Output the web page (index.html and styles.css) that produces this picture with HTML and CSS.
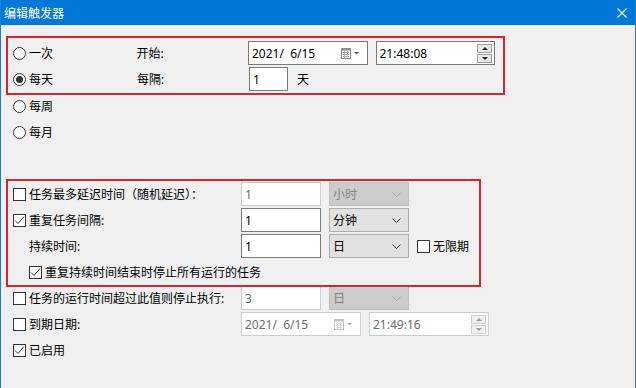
FILE: index.html
```html
<!DOCTYPE html>
<html>

<head>
    <meta charset="utf-8">
    <link rel="stylesheet" href="styles.css">
</head>

<body>
    <div class="window">
        <div class="titlebar">
            <span class="title">编辑触发器</span>
            <svg class="close" width="10" height="10" viewBox="0 0 10 10">
                <path d="M0.5 0.5 L9.5 9.5 M9.5 0.5 L0.5 9.5" stroke="#fff" stroke-width="1.1" fill="none" />
            </svg>
        </div>

        <div class="content">
            <div class="group schedule">
                <div class="row">
                    <label class="opt"><span class="radio"></span>一次</label>
                    <span class="field-label">开始:</span>
                    <div class="box picker">
                        <span class="value">2021/  6/15</span>
                        <svg class="cal" width="20" height="11" viewBox="0 0 20 11">
                            <rect x="0.5" y="0.5" width="9" height="10" fill="#fff" stroke="#8a8a8a" />
                            <rect x="0.5" y="0.5" width="9" height="2" fill="#8a8a8a" />
                            <path d="M2 4.5 H8 M2 6.5 H8 M2 8.5 H8 M3.5 3 V10 M6.5 3 V10" stroke="#b0b0b0" />
                            <path d="M13 4 L18 4 L15.5 6.5 Z" fill="#555" />
                        </svg>
                    </div>
                    <div class="box picker time">
                        <span class="value">21:48:08</span>
                        <div class="spin">
                            <span class="spin-btn"><i class="up"></i></span>
                            <span class="spin-btn"><i class="down"></i></span>
                        </div>
                    </div>
                </div>
                <div class="row">
                    <label class="opt"><span class="radio checked"></span>每天</label>
                    <span class="field-label">每隔:</span>
                    <div class="box every">1</div>
                    <span class="unit">天</span>
                </div>
            </div>

            <div class="row plain">
                <label class="opt"><span class="radio"></span>每周</label>
            </div>
            <div class="row plain">
                <label class="opt"><span class="radio"></span>每月</label>
            </div>

            <div class="group advanced">
                <div class="row">
                    <label class="check-label"><span class="check"></span>任务最多延迟时间（随机延迟）：</label>
                    <div class="box num disabled">1</div>
                    <div class="combo disabled"><span>小时</span>
                        <svg width="9" height="5" viewBox="0 0 9 5"><path d="M0.5 0.5 L4.5 4.5 L8.5 0.5" stroke="#a8a8a8" fill="none" /></svg>
                    </div>
                </div>
                <div class="row">
                    <label class="check-label"><span class="check checked">
                        <svg width="11" height="11" viewBox="0 0 11 11"><path d="M1 5.5 L4 8.5 L10 1.5" stroke="#333" fill="none" /></svg>
                    </span>重复任务间隔:</label>
                    <div class="box num">1</div>
                    <div class="combo"><span>分钟</span>
                        <svg width="9" height="5" viewBox="0 0 9 5"><path d="M0.5 0.5 L4.5 4.5 L8.5 0.5" stroke="#333" fill="none" /></svg>
                    </div>
                </div>
                <div class="row sub">
                    <span class="sub-label">持续时间:</span>
                    <div class="box num">1</div>
                    <div class="combo"><span>日</span>
                        <svg width="9" height="5" viewBox="0 0 9 5"><path d="M0.5 0.5 L4.5 4.5 L8.5 0.5" stroke="#333" fill="none" /></svg>
                    </div>
                    <label class="inline-check"><span class="check"></span>无限期</label>
                </div>
                <div class="row sub">
                    <label class="inline-check"><span class="check checked">
                        <svg width="11" height="11" viewBox="0 0 11 11"><path d="M1 5.5 L4 8.5 L10 1.5" stroke="#333" fill="none" /></svg>
                    </span>重复持续时间结束时停止所有运行的任务</label>
                </div>
            </div>

            <div class="row plain">
                <label class="check-label"><span class="check"></span>任务的运行时间超过此值则停止执行:</label>
                <div class="box num disabled">3</div>
                <div class="combo disabled"><span>日</span>
                    <svg width="9" height="5" viewBox="0 0 9 5"><path d="M0.5 0.5 L4.5 4.5 L8.5 0.5" stroke="#a8a8a8" fill="none" /></svg>
                </div>
            </div>
            <div class="row plain">
                <label class="check-label"><span class="check"></span>到期日期:</label>
                <div class="box picker disabled">
                    <span class="value">2021/  6/15</span>
                    <svg class="cal" width="20" height="11" viewBox="0 0 20 11">
                        <rect x="0.5" y="0.5" width="9" height="10" fill="#fff" stroke="#c4c4c4" />
                        <rect x="0.5" y="0.5" width="9" height="2" fill="#c4c4c4" />
                        <path d="M2 4.5 H8 M2 6.5 H8 M2 8.5 H8 M3.5 3 V10 M6.5 3 V10" stroke="#dadada" />
                        <path d="M13 4 L18 4 L15.5 6.5 Z" fill="#b5b5b5" />
                    </svg>
                </div>
                <div class="box picker time disabled">
                    <span class="value">21:49:16</span>
                    <div class="spin">
                        <span class="spin-btn"><i class="up"></i></span>
                        <span class="spin-btn"><i class="down"></i></span>
                    </div>
                </div>
            </div>
            <div class="row plain">
                <label class="check-label"><span class="check checked">
                    <svg width="11" height="11" viewBox="0 0 11 11"><path d="M1 5.5 L4 8.5 L10 1.5" stroke="#333" fill="none" /></svg>
                </span>已启用</label>
            </div>
        </div>
    </div>
</body>

</html>
```

FILE: styles.css
```css
* {
    margin: 0;
    padding: 0;
    box-sizing: border-box;
}

body {
    font-family: 'Noto Sans', 'Noto Sans CJK SC', sans-serif;
    font-size: 12px;
    color: #000;
    background-color: #f0f0f0;
}

.window {
    width: 636px;
    height: 388px;
    background: #f0f0f0;
    border-left: 1px solid #1a7fd4;
    border-right: 1px solid #1a7fd4;
    overflow: hidden;
}

.titlebar {
    height: 25px;
    background: #0078d7;
    color: #fff;
    display: flex;
    align-items: center;
    justify-content: space-between;
    padding: 0 9px 0 4px;
    margin: 0 -1px;
}

.title {
    font-size: 12px;
    font-family: 'Noto Sans CJK SC', sans-serif;
}

.close {
    margin-top: 1px;
}

.content {
    padding-top: 13px;
}

/* red highlight frames */
.group {
    outline: 2px solid #d7262f;
    margin-left: 7px;
}

.schedule {
    width: 495px;
    padding: 2px 0 1px;
}

.advanced {
    width: 471px;
    margin-top: 36px;
}

.row {
    height: 26px;
    display: flex;
    align-items: center;
    padding-left: 5px;
    white-space: nowrap;
}

.row.plain {
    padding-left: 12px;
}

.row.sub {
    padding-left: 21px;
}

.opt {
    width: 124px;
    display: flex;
    align-items: center;
}

.radio {
    width: 13px;
    height: 13px;
    border: 1px solid #333;
    border-radius: 50%;
    background: #fff;
    margin-right: 3px;
    display: flex;
    align-items: center;
    justify-content: center;
}

.radio.checked::after {
    content: "";
    width: 7px;
    height: 7px;
    border-radius: 50%;
    background: #333;
}

.field-label {
    width: 112px;
}

.box {
    height: 24px;
    background: #fff;
    border: 1px solid #7a7a7a;
    display: flex;
    align-items: center;
    padding-left: 3px;
}

.box.disabled {
    border-color: #cccccc;
    color: #6d6d6d;
}

.picker {
    width: 120px;
    margin-right: 8px;
    justify-content: space-between;
    padding-right: 6px;
}

.picker .value {
    white-space: pre;
}

.picker.time {
    padding-right: 2px;
}

.cal {
    margin-top: 1px;
}

.spin {
    display: flex;
    flex-direction: column;
    gap: 1px;
}

.spin-btn {
    width: 15px;
    height: 9px;
    border: 1px solid #a0a0a0;
    background: #e8e8e8;
    display: flex;
    align-items: center;
    justify-content: center;
}

.spin-btn i {
    width: 0;
    height: 0;
    border-left: 3px solid transparent;
    border-right: 3px solid transparent;
}

.spin-btn .up {
    border-bottom: 3px solid #222;
}

.spin-btn .down {
    border-top: 3px solid #222;
}

.disabled .spin-btn {
    border-color: #cfcfcf;
    background: #f0f0f0;
}

.disabled .spin-btn .up {
    border-bottom-color: #9a9a9a;
}

.disabled .spin-btn .down {
    border-top-color: #9a9a9a;
}

.every {
    width: 39px;
    margin-right: 9px;
}

.check-label {
    width: 228px;
    display: flex;
    align-items: center;
}

.sub-label {
    width: 212px;
}

.check {
    width: 13px;
    height: 13px;
    border: 1px solid #333;
    background: #fff;
    margin-right: 3px;
    display: flex;
    align-items: center;
    justify-content: center;
    flex-shrink: 0;
}

.inline-check {
    display: flex;
    align-items: center;
}

.num {
    width: 80px;
    margin-right: 8px;
}

.combo {
    width: 80px;
    height: 24px;
    margin-right: 8px;
    background: #e1e1e1;
    border: 1px solid #adadad;
    display: flex;
    align-items: center;
    justify-content: space-between;
    padding: 0 7px 0 3px;
}

.combo.disabled {
    background: #cccccc;
    border-color: #bfbfbf;
    color: #838383;
}
```
